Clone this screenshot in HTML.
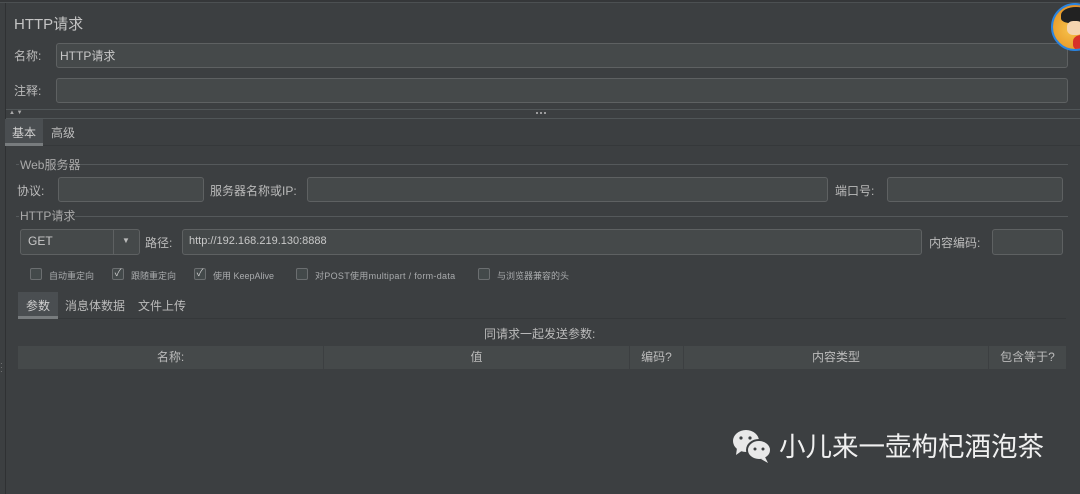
<!DOCTYPE html>
<html><head><meta charset="utf-8"><style>
*{margin:0;padding:0;box-sizing:border-box}
body{width:1080px;height:494px;background:#3c3f41;overflow:hidden;position:relative;font-family:"Liberation Sans","Noto Sans CJK SC",sans-serif;color:#bbbbbb;font-size:12px}
.a{position:absolute;white-space:nowrap}
.in{position:absolute;background:#45494a;border:1px solid #5e6162;border-radius:3px}
.ln{position:absolute;height:1px;background:#515658}
.cb{position:absolute;width:12px;height:12px;border:1px solid #6b6e70;border-radius:2px;background:#43494a;font-size:10px;line-height:10px;text-align:center;color:#ccc}
.sm{font-size:9px;color:#a9abad;top:269px}
.th{position:absolute;top:346px;height:23px;background:#45494a;line-height:23px;text-align:center;color:#bbb}
.dot{position:absolute;top:112px;width:2px;height:2px;border-radius:1px;background:#bbb}
</style></head><body>
<div class="a" style="left:0;top:0;width:1080px;height:3px;background:#353739;border-bottom:1px solid #4c5052"></div>
<div class="a" style="left:5px;top:3px;width:1px;height:491px;background:#2f3133"></div>
<div class="a" style="left:14px;top:13px;font-size:15px;color:#c4c4c4">HTTP请求</div>
<div class="a" style="left:14px;top:47px">名称:</div>
<div class="in" style="left:56px;top:43px;width:1012px;height:25px"></div>
<div class="a" style="left:60px;top:47px;color:#c8c8c8">HTTP请求</div>
<div class="a" style="left:14px;top:82px">注释:</div>
<div class="in" style="left:56px;top:78px;width:1012px;height:25px"></div>
<div class="ln" style="left:6px;top:109px;width:1074px"></div>
<div class="a" style="left:9px;top:110px;font-size:6px;color:#aaa">▲ ▼</div>
<div class="dot" style="left:536px"></div><div class="dot" style="left:540px"></div><div class="dot" style="left:544px"></div>
<div class="ln" style="left:6px;top:118px;width:1074px"></div>
<div class="a" style="left:5px;top:119px;width:38px;height:27px;background:#4a4e51;border-bottom:3px solid #787c7e"></div>
<div class="a" style="left:12px;top:124px;color:#d0d0d0">基本</div>
<div class="a" style="left:51px;top:124px">高级</div>
<div class="ln" style="left:43px;top:145px;width:1037px;background:#35383a"></div>
<div class="a" style="left:20px;top:156px;color:#aaa">Web服务器</div>
<div class="ln" style="left:16px;top:164px;width:3px;background:#55595b"></div>
<div class="ln" style="left:80px;top:164px;width:988px;background:#55595b"></div>
<div class="a" style="left:17px;top:182px">协议:</div>
<div class="in" style="left:58px;top:177px;width:146px;height:25px"></div>
<div class="a" style="left:210px;top:182px">服务器名称或IP:</div>
<div class="in" style="left:307px;top:177px;width:521px;height:25px"></div>
<div class="a" style="left:835px;top:182px">端口号:</div>
<div class="in" style="left:887px;top:177px;width:176px;height:25px"></div>
<div class="a" style="left:20px;top:207px;color:#aaa">HTTP请求</div>
<div class="ln" style="left:16px;top:216px;width:3px;background:#55595b"></div>
<div class="ln" style="left:75px;top:216px;width:993px;background:#55595b"></div>
<div class="in" style="left:20px;top:229px;width:120px;height:26px;background:#45494a"></div>
<div class="a" style="left:113px;top:230px;width:1px;height:24px;background:#5e6162"></div>
<div class="a" style="left:28px;top:234px;color:#c8c8c8">GET</div>
<div class="a" style="left:122px;top:236px;font-size:8px;color:#bbb">▼</div>
<div class="a" style="left:145px;top:234px">路径:</div>
<div class="in" style="left:182px;top:229px;width:740px;height:26px"></div>
<div class="a" style="left:189px;top:235px;color:#c8c8c8;font-size:11px">http://192.168.219.130:8888</div>
<div class="a" style="left:929px;top:234px">内容编码:</div>
<div class="in" style="left:992px;top:229px;width:71px;height:26px"></div>
<div class="cb" style="left:30px;top:268px"></div><div class="a sm" style="left:49px">自动重定向</div>
<div class="cb" style="left:112px;top:268px">✓</div><div class="a sm" style="left:131px">跟随重定向</div>
<div class="cb" style="left:194px;top:268px">✓</div><div class="a sm" style="left:213px">使用 KeepAlive</div>
<div class="cb" style="left:296px;top:268px"></div><div class="a sm" style="left:315px;letter-spacing:0.3px">对POST使用multipart / form-data</div>
<div class="cb" style="left:478px;top:268px"></div><div class="a sm" style="left:497px">与浏览器兼容的头</div>
<div class="a" style="left:18px;top:292px;width:40px;height:27px;background:#4a4e51;border-bottom:3px solid #787c7e"></div>
<div class="a" style="left:26px;top:297px;color:#d0d0d0">参数</div>
<div class="a" style="left:65px;top:297px">消息体数据</div>
<div class="a" style="left:138px;top:297px">文件上传</div>
<div class="ln" style="left:58px;top:318px;width:1008px;background:#35383a"></div>
<div class="a" style="left:484px;top:325px">同请求一起发送参数:</div>
<div class="th" style="left:18px;width:305px">名称:</div>
<div class="th" style="left:324px;width:305px">值</div>
<div class="th" style="left:630px;width:53px">编码?</div>
<div class="th" style="left:684px;width:304px">内容类型</div>
<div class="th" style="left:989px;width:77px">包含等于?</div>
<div class="a" style="left:0;top:362px;font-size:8px;color:#888;line-height:4px">·<br>·<br>·</div>
<svg class="a" style="left:732px;top:428px" width="42" height="36" viewBox="0 0 42 36">
<ellipse cx="14" cy="13" rx="13" ry="11" fill="#e8e8e8"/><path d="M5 20 L4 27 L11 22Z" fill="#e8e8e8"/>
<circle cx="9" cy="10" r="1.6" fill="#3c3f41"/><circle cx="18" cy="10" r="1.6" fill="#3c3f41"/>
<ellipse cx="27" cy="22" rx="12" ry="10" fill="#e8e8e8" stroke="#3c3f41" stroke-width="2"/><path d="M33 29 L36 35 L29 31Z" fill="#e8e8e8"/>
<circle cx="23" cy="21" r="1.5" fill="#3c3f41"/><circle cx="31" cy="21" r="1.5" fill="#3c3f41"/>
</svg>
<div class="a" style="left:779px;top:428px;font-size:26.5px;color:#f0f0f0;font-family:'Noto Sans CJK SC',sans-serif;line-height:34px">小儿来一壶枸杞酒泡茶</div>
<div class="a" style="left:1051px;top:3px;width:48px;height:48px;border-radius:50%;border:2px solid #2a84e0;background:radial-gradient(circle at 40% 55%,#f7c24a 0,#e89a2a 60%,#c85a20 100%);overflow:hidden">
<div style="position:absolute;left:8px;top:2px;width:30px;height:16px;background:#222;border-radius:50% 50% 30% 30%"></div>
<div style="position:absolute;left:20px;top:30px;width:20px;height:16px;background:#d8302a;border-radius:40%"></div>
<div style="position:absolute;left:14px;top:16px;width:16px;height:14px;background:#f5d5b0;border-radius:40%"></div>
</div>
</body></html>
